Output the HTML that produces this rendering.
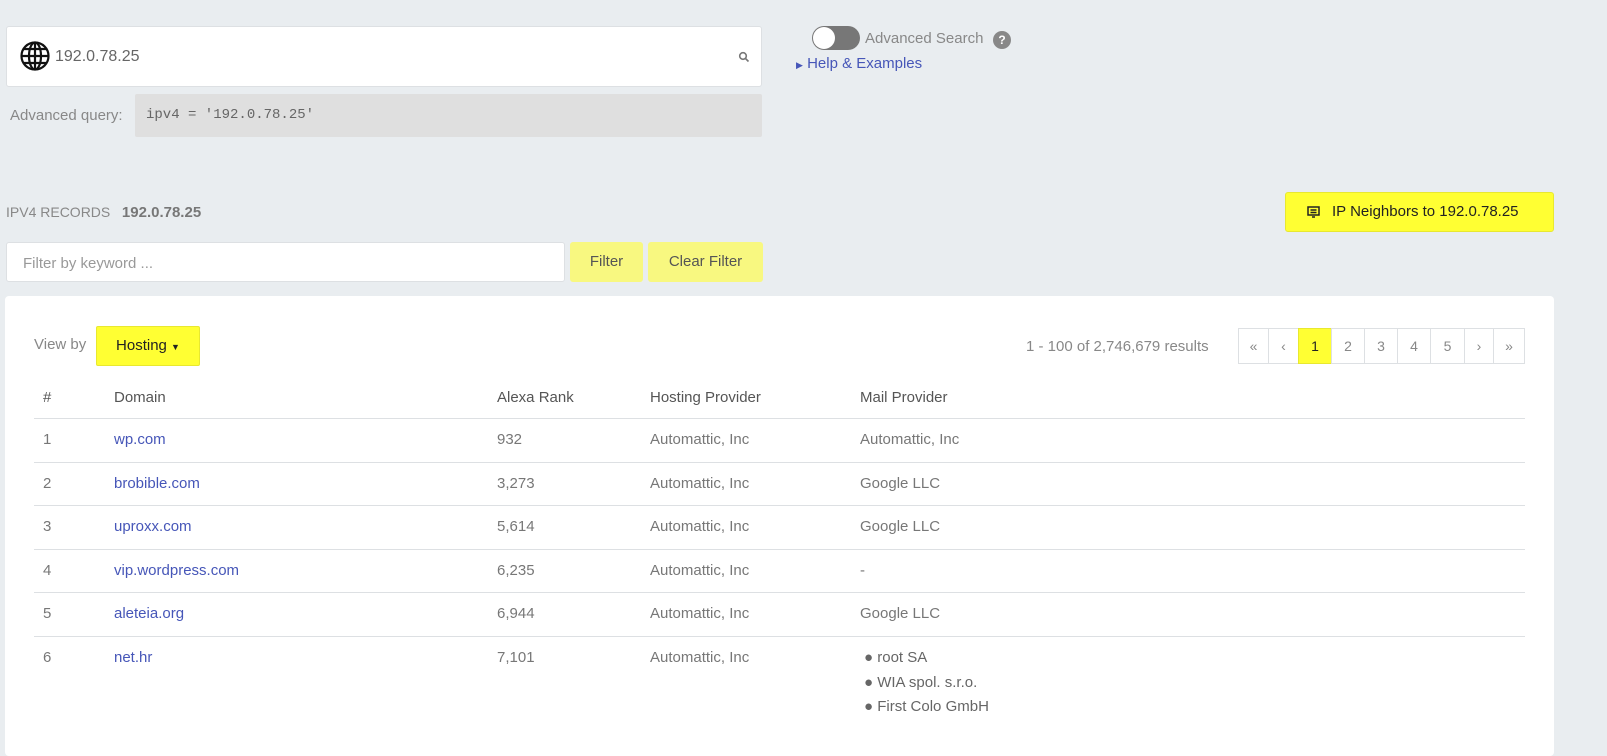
<!DOCTYPE html><html><head><style>
*{box-sizing:border-box;margin:0;padding:0}
body{width:1607px;height:736px;overflow:hidden;background:#e9edf0;font-family:"Liberation Sans",sans-serif;color:#777;font-size:15px;position:relative}
.a{position:absolute}
a{color:#4656b8;text-decoration:none}
.row{position:absolute;left:34px;width:1491px;border-top:1px solid #dde0e3;height:44px}
.row span{position:absolute;top:12px}
.pg{position:absolute;top:328px;height:36px;border:1px solid #dde0e3;text-align:center;line-height:34px;font-size:14px;color:#888;background:#fff}
</style></head><body>
<div class="a" style="left:6px;top:26px;width:756px;height:61px;background:#fff;border:1px solid #dde0e3;border-radius:3px"></div>
<svg class="a" style="left:20px;top:41px" width="30" height="30" viewBox="0 0 30 30" fill="none" stroke="#111" stroke-width="2.2"><circle cx="15" cy="15" r="13.5"/><ellipse cx="15" cy="15" rx="6" ry="13.5"/><line x1="15" y1="1.5" x2="15" y2="28.5"/><line x1="1.5" y1="15" x2="28.5" y2="15"/><line x1="4" y1="8" x2="26" y2="8"/><line x1="4" y1="22" x2="26" y2="22"/></svg>
<div class="a" style="left:55px;top:48px;font-size:16px;color:#666">192.0.78.25</div>
<svg class="a" style="left:738px;top:51px" width="12" height="12" viewBox="0 0 12 12" fill="none" stroke="#777" stroke-width="1.6"><circle cx="5" cy="5" r="3.3"/><line x1="7.5" y1="7.5" x2="10.5" y2="10.5"/></svg>
<div class="a" style="left:10px;top:107px;color:#888">Advanced query:</div>
<div class="a" style="left:135px;top:94px;width:627px;height:43px;background:#dfdfdf;border-radius:2px"></div>
<div class="a" style="left:146px;top:107px;font-family:'Liberation Mono',monospace;font-size:14px;color:#666">ipv4 = '192.0.78.25'</div>
<div class="a" style="left:812px;top:26px;width:48px;height:24px;border-radius:12px;background:#777"></div>
<div class="a" style="left:813px;top:27px;width:22px;height:22px;border-radius:11px;background:#fff"></div>
<div class="a" style="left:865px;top:30px;color:#888">Advanced Search</div>
<div class="a" style="left:993px;top:31px;width:18px;height:18px;border-radius:9px;background:#888;color:#fff;font-size:12px;text-align:center;line-height:18px;font-weight:bold">?</div>
<div class="a" style="left:796px;top:55px;color:#4656b8"><span style="font-size:9px">▶</span> Help &amp; Examples</div>
<div class="a" style="left:6px;top:204px;font-size:14px;color:#888">IPV4 RECORDS &nbsp;&nbsp;<b style="color:#777;font-size:15px">192.0.78.25</b></div>
<div class="a" style="left:1285px;top:192px;width:269px;height:40px;background:#ffff33;border:1px solid #e8e830;border-radius:3px;color:#222;line-height:38px;padding-left:46px">IP Neighbors to 192.0.78.25</div>
<svg class="a" style="left:1307px;top:206px" width="13" height="12" viewBox="0 0 13 12" fill="none" stroke="#222" stroke-width="1.5"><rect x="1" y="1" width="11" height="8"/><line x1="3.5" y1="4" x2="9.5" y2="4"/><line x1="3.5" y1="6.5" x2="9.5" y2="6.5"/><line x1="5" y1="11" x2="8" y2="11"/></svg>
<div class="a" style="left:6px;top:242px;width:559px;height:40px;background:#fff;border:1px solid #dde0e3;border-radius:3px;padding:12px 16px;color:#999">Filter by keyword ...</div>
<div class="a" style="left:570px;top:242px;width:73px;height:40px;background:#f8f880;border-radius:3px;text-align:center;line-height:40px;color:#555">Filter</div>
<div class="a" style="left:648px;top:242px;width:115px;height:40px;background:#f8f880;border-radius:3px;text-align:center;line-height:40px;color:#555">Clear Filter</div>
<div class="a" style="left:5px;top:296px;width:1549px;height:460px;background:#fff;border-radius:4px"></div>
<div class="a" style="left:34px;top:336px;color:#888">View by</div>
<div class="a" style="left:96px;top:326px;width:104px;height:40px;background:#ffff33;border:1px solid #e8e830;border-radius:2px;text-align:center;line-height:38px;color:#222">Hosting <span style="font-size:9px">▼</span></div>
<div class="a" style="left:1026px;top:338px;color:#888">1 - 100 of 2,746,679 results</div>
<div class="pg" style="left:1238px;width:31px">«</div><div class="pg" style="left:1268px;width:31px">‹</div>
<div class="pg" style="left:1298px;width:34px;background:#ffff33;border-color:#e8e830;color:#222">1</div>
<div class="pg" style="left:1331px;width:34px">2</div><div class="pg" style="left:1364px;width:34px">3</div><div class="pg" style="left:1397px;width:34px">4</div><div class="pg" style="left:1430px;width:35px">5</div><div class="pg" style="left:1464px;width:30px">›</div><div class="pg" style="left:1493px;width:32px">»</div>
<div class="a" style="left:43px;top:389px;color:#555">#</div><div class="a" style="left:114px;top:389px;color:#555">Domain</div><div class="a" style="left:497px;top:389px;color:#555">Alexa Rank</div><div class="a" style="left:650px;top:389px;color:#555">Hosting Provider</div><div class="a" style="left:860px;top:389px;color:#555">Mail Provider</div>
<div class="row" style="top:418px"><span style="left:9px">1</span><span style="left:80px"><a>wp.com</a></span><span style="left:463px">932</span><span style="left:616px">Automattic, Inc</span><span style="left:826px">Automattic, Inc</span></div>
<div class="row" style="top:462px"><span style="left:9px">2</span><span style="left:80px"><a>brobible.com</a></span><span style="left:463px">3,273</span><span style="left:616px">Automattic, Inc</span><span style="left:826px">Google LLC</span></div>
<div class="row" style="top:505px"><span style="left:9px">3</span><span style="left:80px"><a>uproxx.com</a></span><span style="left:463px">5,614</span><span style="left:616px">Automattic, Inc</span><span style="left:826px">Google LLC</span></div>
<div class="row" style="top:549px"><span style="left:9px">4</span><span style="left:80px"><a>vip.wordpress.com</a></span><span style="left:463px">6,235</span><span style="left:616px">Automattic, Inc</span><span style="left:826px">-</span></div>
<div class="row" style="top:592px"><span style="left:9px">5</span><span style="left:80px"><a>aleteia.org</a></span><span style="left:463px">6,944</span><span style="left:616px">Automattic, Inc</span><span style="left:826px">Google LLC</span></div>
<div class="row" style="top:636px;height:120px"><span style="left:9px">6</span><span style="left:80px"><a>net.hr</a></span><span style="left:463px">7,101</span><span style="left:616px">Automattic, Inc</span><span style="left:830px;line-height:24.5px;top:9px;color:#666">● root SA<br>● WIA spol. s.r.o.<br>● First Colo GmbH</span></div>
</body></html>
